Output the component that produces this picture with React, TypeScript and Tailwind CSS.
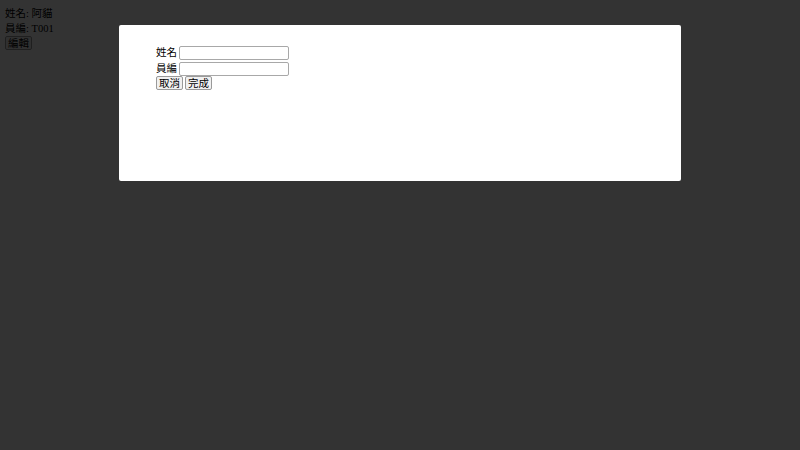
import { useState } from "react"

interface IEmployee {
  name: string
  id: string
}

const btnClass =
  "h-[14px] w-[27px] rounded-[2px] border border-[#9a9a9a] bg-[#f0f0f0] p-0 text-[10.5px] leading-[12px] font-['Noto_Sans_CJK_TC',sans-serif]"

const inputClass =
  "h-[14px] w-[110px] rounded-[2px] border border-[#a8a8a8] bg-white px-[1px] text-[10px] outline-none"

const EditModal = ({
  employee,
  onCancel,
  onDone,
}: {
  employee: IEmployee
  onCancel: () => void
  onDone: (e: IEmployee) => void
}) => {
  const [name, setName] = useState("")
  const [id, setId] = useState("")

  return (
    <div className="fixed inset-0 bg-black/80">
      <div className="mx-auto mt-[25px] h-[156px] w-[562px] rounded-[2px] bg-white pl-[37px] pt-[20px]">
        <div className="flex h-[16px] items-start pt-[1px]">
          <span className="w-[23px] leading-[14px]">姓名</span>
          <input className={inputClass} value={name} onChange={(e) => setName(e.target.value)} />
        </div>
        <div className="flex h-[15px] items-start pt-[1px]">
          <span className="w-[23px] leading-[14px]">員編</span>
          <input className={inputClass} value={id} onChange={(e) => setId(e.target.value)} />
        </div>
        <div className="flex gap-[2px]">
          <button className={btnClass} onClick={onCancel}>
            取消
          </button>
          <button
            className={btnClass}
            onClick={() => onDone({ name: name || employee.name, id: id || employee.id })}
          >
            完成
          </button>
        </div>
      </div>
    </div>
  )
}

const App = () => {
  const [employee, setEmployee] = useState<IEmployee>({ name: "阿貓", id: "T001" })
  const [editing, setEditing] = useState(true)

  return (
    <div className="relative min-h-screen bg-white pl-[5px] pt-[6px] text-[10.5px] text-black font-['Liberation_Serif','Noto_Sans_CJK_TC',serif]">
      <div className="h-[15px] leading-[15px]">姓名: {employee.name}</div>
      <div className="h-[15px] leading-[15px]">員編: {employee.id}</div>
      <button className={btnClass} onClick={() => setEditing(true)}>
        編輯
      </button>

      {editing && (
        <EditModal
          employee={employee}
          onCancel={() => setEditing(false)}
          onDone={(e) => {
            setEmployee(e)
            setEditing(false)
          }}
        />
      )}
    </div>
  )
}

export default App
